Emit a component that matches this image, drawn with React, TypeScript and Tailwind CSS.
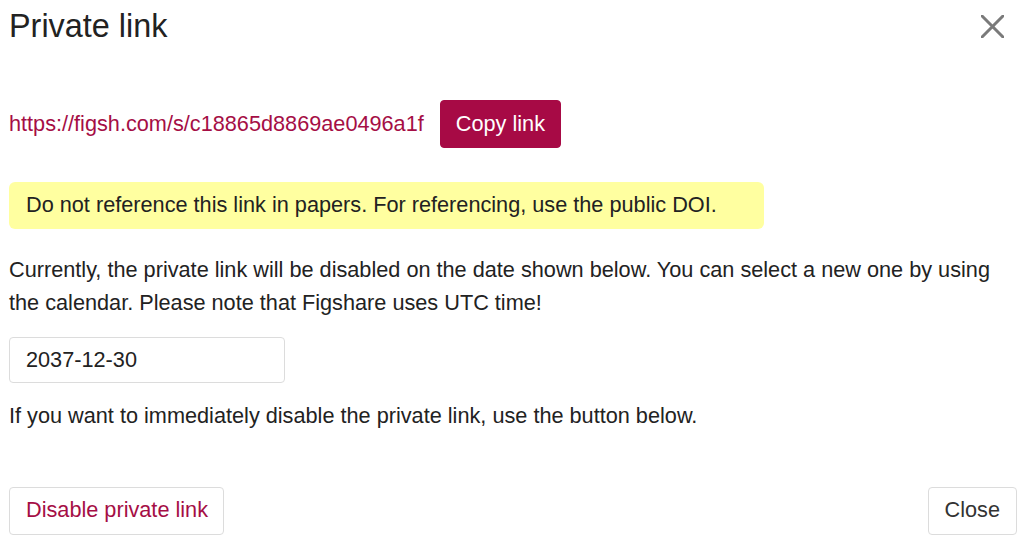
import React from "react";

export default function App() {
  return (
    <div
      className="w-[1024px] h-[537px] bg-white text-[#222] text-[21.7px] leading-[1.5] overflow-hidden pl-[9px] pr-[7px]"
      style={{ fontFamily: '"Liberation Sans", Arial, sans-serif' }}
    >
      <div className="flex items-start justify-between pt-[7px]">
        <h1 className="text-[32.4px] leading-[1.2] font-normal m-0">Private link</h1>
        <button className="mt-[8px] mr-[13px] w-[23px] h-[23px]" aria-label="Close">
          <svg width="23" height="23" viewBox="0 0 23 23">
            <path d="M1 1 L22 22 M22 1 L1 22" stroke="#7a7a7a" strokeWidth="3" strokeLinecap="square" fill="none" />
          </svg>
        </button>
      </div>

      <div className="flex items-center gap-[16px] mt-[54px]">
        <a className="text-[#a50e45]">https://figsh.com/s/c18865d8869ae0496a1f</a>
        <button className="bg-[#a70a45] text-white border border-[#a70a45] rounded-[4px] px-[15px] py-[7px] leading-[1.5]">
          Copy link
        </button>
      </div>

      <div className="mt-[34px] w-[755px] bg-[#ffffa0] rounded-[6px] px-[17px] py-[7px]">
        Do not reference this link in papers. For referencing, use the public DOI.
      </div>

      <p className="mt-[25px]">
        Currently, the private link will be disabled on the date shown below. You can select a new one by using the calendar. Please note that Figshare uses UTC time!
      </p>

      <div className="mt-[18px] w-[276px] h-[46px] border border-[#dcdcdc] rounded-[4px] px-[16px] flex items-center">
        2037-12-30
      </div>

      <p className="mt-[17px]">If you want to immediately disable the private link, use the button below.</p>

      <div className="flex justify-between mt-[54px]">
        <button className="h-[48px] border border-[#dcdcdc] rounded-[4px] pl-[16px] pr-[15px] text-[#a50e45] bg-white">
          Disable private link
        </button>
        <button className="h-[48px] border border-[#dcdcdc] rounded-[4px] px-[16px] text-[#333] bg-white">
          Close
        </button>
      </div>
    </div>
  );
}
